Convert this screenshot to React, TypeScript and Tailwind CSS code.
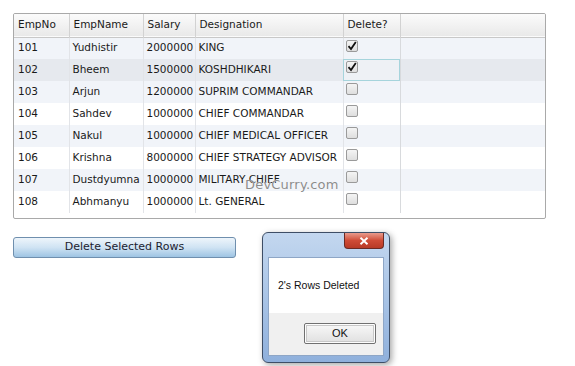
import React from 'react'

interface Emp {
  no: string
  name: string
  salary: string
  designation: string
  del: boolean
}

const ROWS: Emp[] = [
  { no: '101', name: 'Yudhistir', salary: '2000000', designation: 'KING', del: true },
  { no: '102', name: 'Bheem', salary: '1500000', designation: 'KOSHDHIKARI', del: true },
  { no: '103', name: 'Arjun', salary: '1200000', designation: 'SUPRIM COMMANDAR', del: false },
  { no: '104', name: 'Sahdev', salary: '1000000', designation: 'CHIEF COMMANDAR', del: false },
  { no: '105', name: 'Nakul', salary: '1000000', designation: 'CHIEF MEDICAL OFFICER', del: false },
  { no: '106', name: 'Krishna', salary: '8000000', designation: 'CHIEF STRATEGY ADVISOR', del: false },
  { no: '107', name: 'Dustdyumna', salary: '1000000', designation: 'MILITARY CHIEF', del: false },
  { no: '108', name: 'Abhmanyu', salary: '1000000', designation: 'Lt. GENERAL', del: false },
]

function CheckBox({ checked }: { checked: boolean }) {
  return (
    <div className="w-[12px] h-[12px] border border-[#9a9a9a] rounded-[2px] bg-gradient-to-b from-[#f4f4f4] to-[#dedede] flex items-center justify-center">
      {checked && (
        <svg width="10" height="10" viewBox="0 0 10 10">
          <path d="M1.5 5.2 L4 8 L8.8 1" fill="none" stroke="#111" strokeWidth="1.8" />
        </svg>
      )}
    </div>
  )
}

function Grid() {
  const headCell = 'h-[23px] px-[4px] text-left font-normal border-r border-[#d2d2d2]'
  const cell = 'h-[22px] px-[3px] border-r border-[#e2e4e8]'
  return (
    <div className="w-[533px] h-[206px] border border-[#a9a9a9] rounded-[2px] bg-white overflow-hidden">
      <table className="w-full border-collapse table-fixed text-[10.5px] text-[#1a1a1a]" style={{ fontFamily: '"DejaVu Sans", Verdana, sans-serif' }}>
        <colgroup>
          <col className="w-[55px]" />
          <col className="w-[74px]" />
          <col className="w-[52px]" />
          <col className="w-[148px]" />
          <col className="w-[57px]" />
          <col />
        </colgroup>
        <thead>
          <tr className="bg-gradient-to-b from-[#fbfbfb] to-[#e9e9e9] border-b border-[#c8c8c8]">
            <th className={headCell}>EmpNo</th>
            <th className={headCell}>EmpName</th>
            <th className={headCell}>Salary</th>
            <th className={headCell}>Designation</th>
            <th className={headCell}>Delete?</th>
            <th className="h-[23px]"></th>
          </tr>
        </thead>
        <tbody>
          {ROWS.map((r, i) => {
            const selected = i === 1
            const bg = selected ? 'bg-[#e6e9ee]' : i % 2 === 0 ? 'bg-[#f1f4f9]' : 'bg-white'
            return (
              <tr key={r.no} className={bg}>
                <td className={cell + ' pl-[4px]'}>{r.no}</td>
                <td className={cell + ' whitespace-nowrap'}>{r.name}</td>
                <td className={cell}>{r.salary}</td>
                <td className={cell + ' whitespace-nowrap'}>{r.designation}</td>
                <td className={`h-[22px] pl-[2px] align-top pt-[2px] border-r border-[#d8dadd] ${selected ? 'outline outline-1 -outline-offset-1 outline-[#a6d4dc] bg-[#eef1f5]' : ''}`}>
                  <CheckBox checked={r.del} />
                </td>
                <td className="h-[22px]"></td>
              </tr>
            )
          })}
        </tbody>
      </table>
    </div>
  )
}

function MessageBox() {
  return (
    <div className="w-[128px] h-[131px] rounded-[6px] border border-[#3e4e66] bg-gradient-to-b from-[#c3d7ef] via-[#a9c4e6] to-[#8fb0dc] shadow-[2px_2px_6px_rgba(0,0,0,0.35)] flex flex-col px-[5px] pb-[6px]" style={{ fontFamily: '"Liberation Sans", Arial, sans-serif' }}>
      <div className="h-[24px] flex justify-end items-start">
        <div className="w-[40px] h-[16px] rounded-b-[4px] border border-t-0 border-[#6b2a24] bg-gradient-to-b from-[#e89a8c] via-[#cf4b36] to-[#b83a26] flex items-center justify-center">
          <svg width="10" height="8" viewBox="0 0 10 8">
            <path d="M1.5 0.8 L8.5 7.2 M8.5 0.8 L1.5 7.2" stroke="#fff" strokeWidth="1.9" />
          </svg>
        </div>
      </div>
      <div className="flex-1 flex flex-col border border-[#8ea6c6]">
        <div className="h-[55px] bg-white flex items-center pl-[9px] text-[10.5px] text-[#111]">2's Rows Deleted</div>
        <div className="flex-1 bg-[#f0f0f0] flex items-start justify-end pt-[10px] pr-[7px]">
          <div className="w-[72px] h-[21px] border border-[#707070] rounded-[2px] p-[1px] bg-[#fdfdfd]">
            <div className="w-full h-full border border-[#c8c8c8] bg-gradient-to-b from-[#f6f6f6] to-[#e2e2e2] flex items-center justify-center text-[11px] text-[#111]">OK</div>
          </div>
        </div>
      </div>
    </div>
  )
}

export default function App() {
  return (
    <div className="w-[575px] h-[366px] bg-white relative overflow-hidden">
      <div className="pt-[13px] pl-[13px]">
        <Grid />
        <div className="flex items-start mt-[13px]">
          <button
            className="mt-[5px] w-[223px] h-[21px] rounded-[3px] border border-[#6f8fae] bg-gradient-to-b from-[#eef5fb] via-[#cfe3f3] to-[#9ec4e3] text-[11px] text-[#1b2230] flex items-center justify-center"
            style={{ fontFamily: '"DejaVu Sans", Verdana, sans-serif' }}
          >
            Delete Selected Rows
          </button>
          <div className="ml-[26px]">
            <MessageBox />
          </div>
        </div>
      </div>
      <div
        className="absolute left-[245px] top-[175px] text-[13px] text-[#8c8c8c] tracking-[0.2px]"
        style={{ fontFamily: '"DejaVu Sans", sans-serif', textShadow: '0 0 1px #fff' }}
      >
        DevCurry.com
      </div>
    </div>
  )
}
